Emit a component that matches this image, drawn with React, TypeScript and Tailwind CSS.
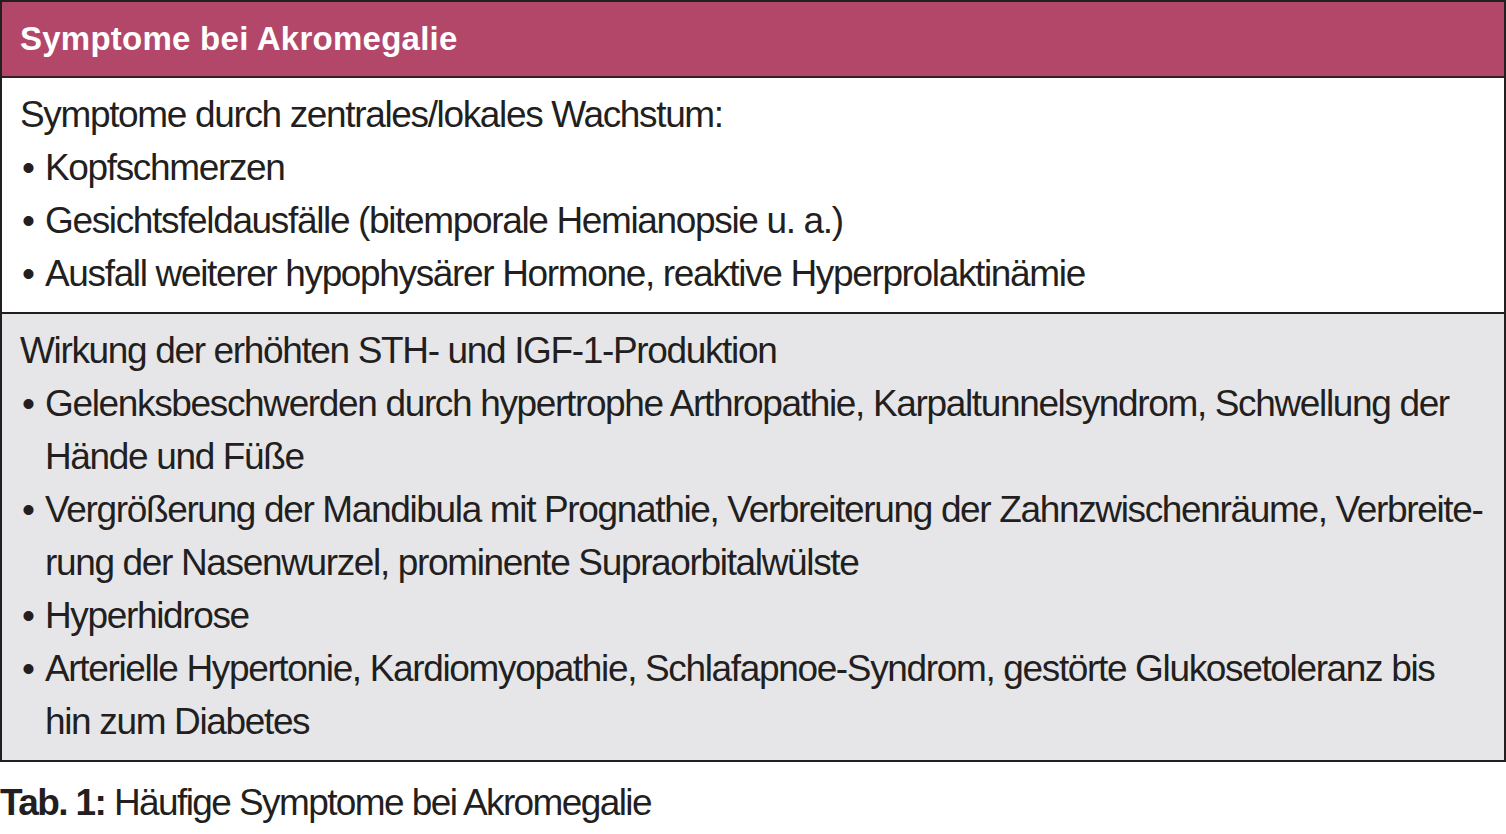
export default function App() {
  const font = { fontFamily: '"Liberation Sans", Arial, sans-serif' };
  return (
    <div className="w-[1506px] h-[834px] bg-white text-[#231f20]" style={font}>
      <div className="w-[1506px] border-2 border-[#231f20]">
        <div className="h-[76px] bg-[#b3476a] flex items-center px-[18px] border-b-2 border-[#3a1c28]">
          <span className="text-white font-bold text-[33px] tracking-[0.25px]">Symptome bei Akromegalie</span>
        </div>
        <div className="bg-white pt-[10px] pb-[12px] px-[18px] text-[37px] leading-[53px] tracking-[-1.35px]">
          <div>Symptome durch zentrales/lokales Wachstum:</div>
          <Bullet lines={["Kopfschmerzen"]} />
          <Bullet lines={["Gesichtsfeldausfälle (bitemporale Hemianopsie u. a.)"]} />
          <Bullet lines={["Ausfall weiterer hypophysärer Hormone, reaktive Hyperprolaktinämie"]} />
        </div>
        <div className="bg-[#e6e6e8] border-t-2 border-[#231f20] pt-[10px] pb-[12px] px-[18px] text-[37px] leading-[53px] tracking-[-1.35px]">
          <div>Wirkung der erhöhten STH- und IGF-1-Produktion</div>
          <Bullet
            lines={[
              "Gelenksbeschwerden durch hypertrophe Arthropathie, Karpaltunnelsyndrom, Schwellung der",
              "Hände und Füße",
            ]}
          />
          <Bullet
            lines={[
              "Vergrößerung der Mandibula mit Prognathie, Verbreiterung der Zahnzwischenräume, Verbreite-",
              "rung der Nasenwurzel, prominente Supraorbitalwülste",
            ]}
          />
          <Bullet lines={["Hyperhidrose"]} />
          <Bullet
            lines={[
              "Arterielle Hypertonie, Kardiomyopathie, Schlafapnoe-Syndrom, gestörte Glukosetoleranz bis",
              "hin zum Diabetes",
            ]}
          />
        </div>
      </div>
      <div className="mt-[18px] text-[37px] leading-[46px] tracking-[-1.6px] whitespace-nowrap">
        <span className="font-bold">Tab. 1:</span> Häufige Symptome bei Akromegalie
      </div>
    </div>
  );
}

function Bullet({ lines }: { lines: string[] }) {
  return (
    <div className="flex">
      <span className="w-[25px] shrink-0 pl-[2px]">•</span>
      <div className="whitespace-nowrap">
        {lines.map((l) => (
          <div key={l}>{l}</div>
        ))}
      </div>
    </div>
  );
}
